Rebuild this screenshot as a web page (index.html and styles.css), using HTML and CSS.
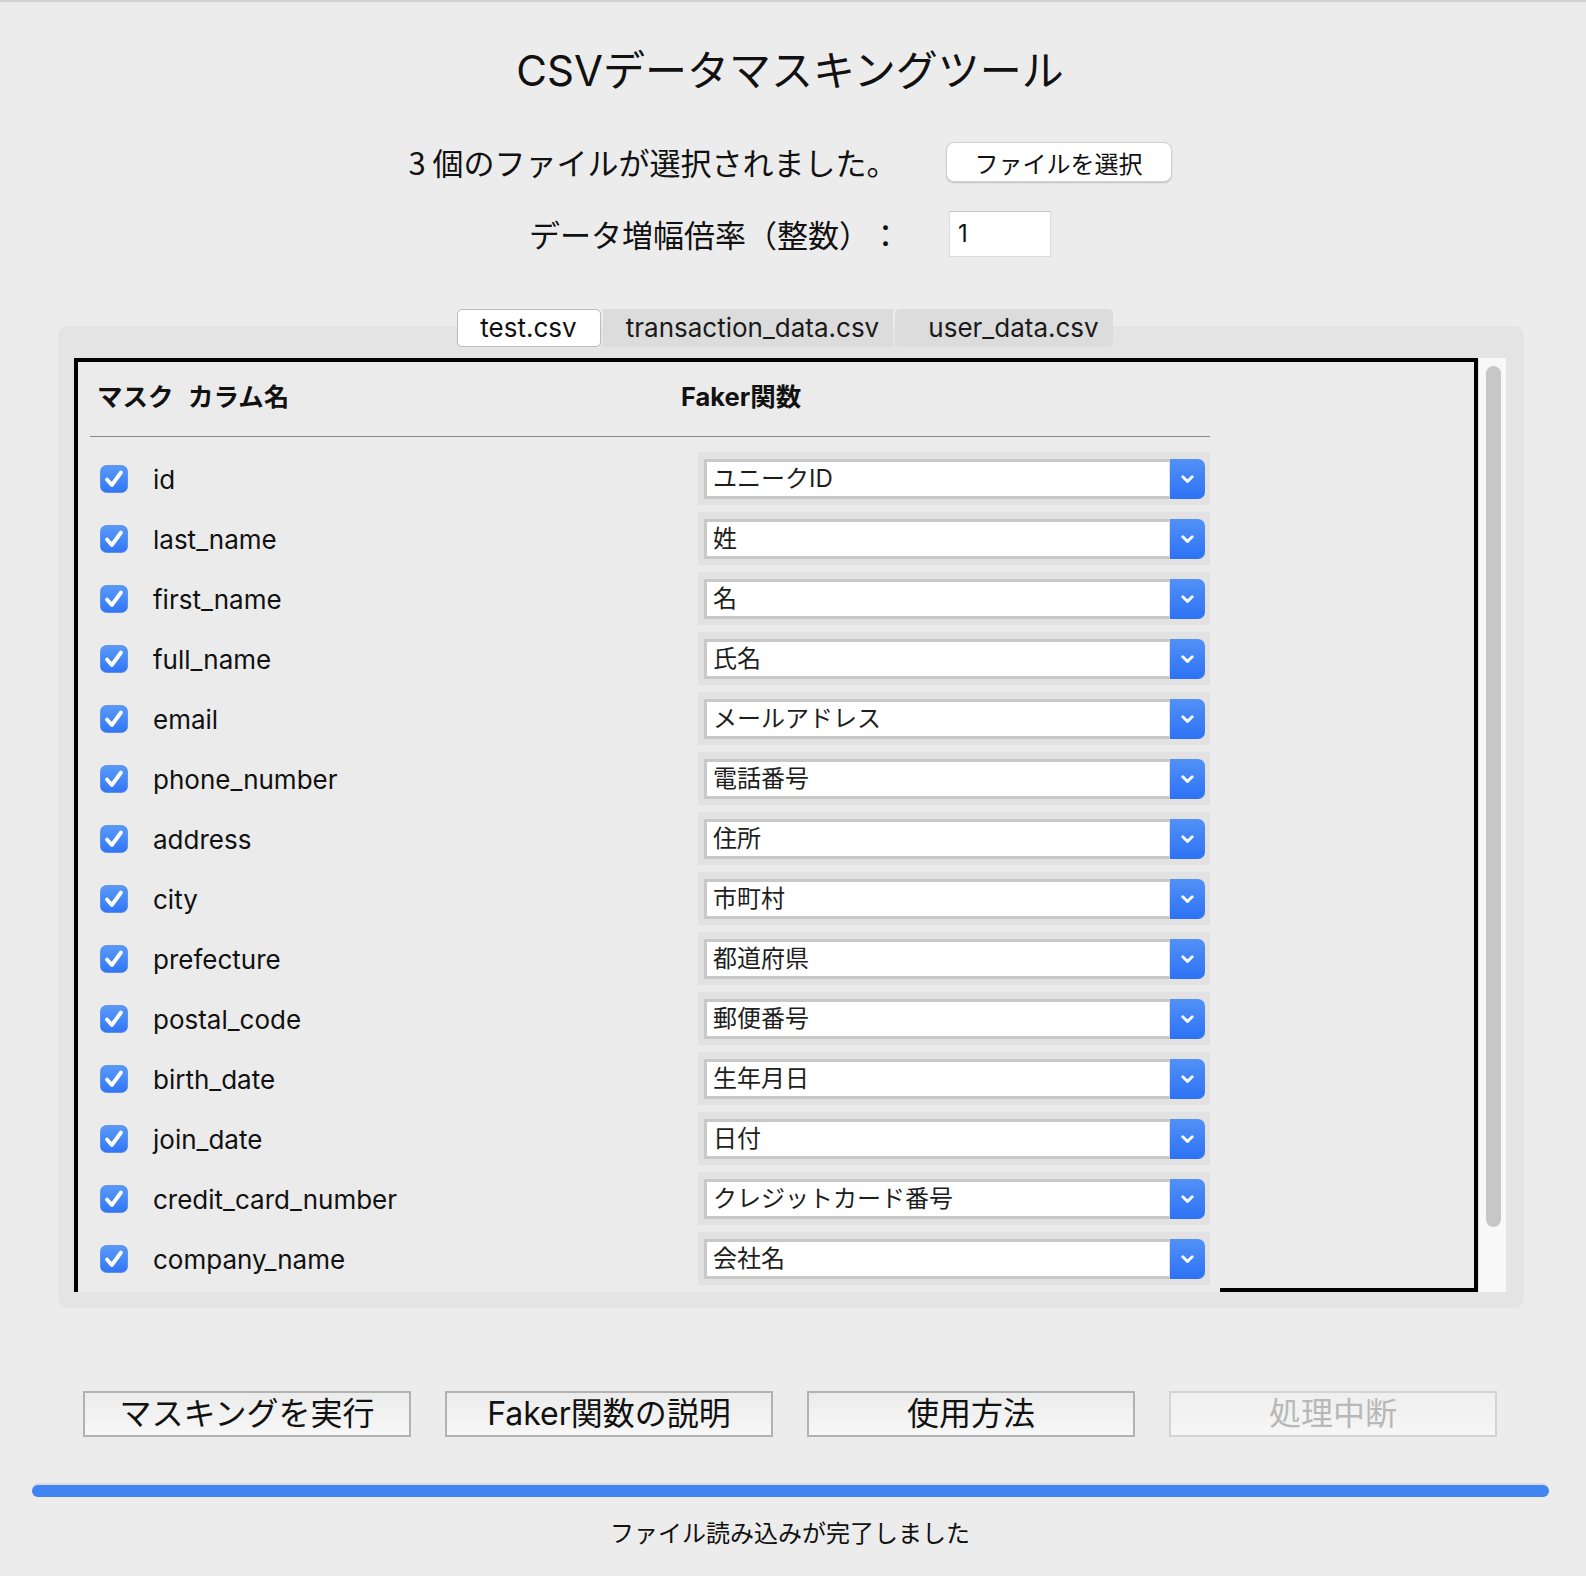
FILE: index.html
```html
<!DOCTYPE html>
<html lang="ja">
<head>
<meta charset="utf-8">
<title>CSVデータマスキングツール</title>
<link rel="stylesheet" href="styles.css">
</head>
<body>
<div class="title">CSVデータマスキングツール</div>

<div class="line line-files">
  <span class="lbl">3 個のファイルが選択されました。</span>
  <button class="pick">ファイルを選択</button>
</div>
<div class="line line-rate">
  <span class="lbl">データ増幅倍率（整数）：</span>
  <div class="entry">1</div>
</div>

<div class="notebook">
  <div class="tabs">
    <div class="tab tab-sel tab-w1">test.csv</div>
    <div class="tab tab-w2">transaction_data.csv</div>
    <div class="tab tab-w3">user_data.csv</div>
  </div>
  <div class="panel-body">
    <div class="frame">
      <div class="list">
        <div class="head">
          <span class="h-mask">マスク</span>
          <span class="h-col">カラム名</span>
          <span class="h-fn">Faker関数</span>
        </div>
        <div class="sep"></div>
        <div class="rows" id="rows"></div>
      </div>
    </div>
    <div class="scrollbar"><div class="thumb"></div></div>
  </div>
</div>

<div class="actions">
  <button class="act">マスキングを実行</button>
  <button class="act">Faker関数の説明</button>
  <button class="act">使用方法</button>
  <button class="act act-off">処理中断</button>
</div>

<div class="progress"><div class="fill"></div></div>
<div class="status">ファイル読み込みが完了しました</div>

<template id="row-tpl">
  <div class="row">
    <svg class="chk" width="28" height="28" viewBox="0 0 28 28">
      <defs>
        <linearGradient id="cg" x1="0" y1="0" x2="0" y2="1">
          <stop offset="0" stop-color="#5a9af9"/>
          <stop offset="1" stop-color="#3176f5"/>
        </linearGradient>
      </defs>
      <rect x="0.5" y="0.5" width="27" height="27" rx="6" fill="url(#cg)" stroke="#3a7be8" stroke-width="0.6"/>
      <polyline points="7,14.5 11.8,20 21,7.5" fill="none" stroke="#fff" stroke-width="3.8" stroke-linecap="round" stroke-linejoin="round"/>
    </svg>
    <span class="col-name"></span>
    <div class="sel-wrap">
      <div class="sel-field"><span class="sel-text"></span></div>
      <div class="sel-btn">
        <svg width="13" height="9" viewBox="0 0 13 9"><polyline points="1.8,1.8 6.5,6.6 11.2,1.8" fill="none" stroke="#fff" stroke-width="2.8" stroke-linecap="round" stroke-linejoin="round"/></svg>
      </div>
    </div>
  </div>
</template>

<script>
  var data = [
    ["id","ユニークID"],["last_name","姓"],["first_name","名"],["full_name","氏名"],
    ["email","メールアドレス"],["phone_number","電話番号"],["address","住所"],
    ["city","市町村"],["prefecture","都道府県"],["postal_code","郵便番号"],
    ["birth_date","生年月日"],["join_date","日付"],["credit_card_number","クレジットカード番号"],
    ["company_name","会社名"]
  ];
  var tpl = document.getElementById('row-tpl');
  var rows = document.getElementById('rows');
  data.forEach(function(d){
    var n = tpl.content.cloneNode(true);
    n.querySelector('.col-name').textContent = d[0];
    n.querySelector('.sel-text').textContent = d[1];
    rows.appendChild(n);
  });
</script>
</body>
</html>
```

FILE: styles.css
```css
* { box-sizing: border-box; }

html, body { margin: 0; padding: 0; }

body {
  background: #ececec;
  border-top: 2px solid #d2d2d2;
  padding-right: 6px;
  font-family: Inter, "Noto Sans CJK JP", sans-serif;
  color: #111;
  text-spacing-trim: space-all;
}

.title {
  margin-top: 42px;
  font-size: 42px;
  line-height: 54px;
  text-align: center;
  color: #111;
}

.line {
  display: flex;
  justify-content: center;
  align-items: center;
  gap: 48px;
}

.line-files { margin-top: 44px; height: 40px; }
.line-rate { margin-top: 29px; height: 46px; }

.lbl {
  font-family: "Noto Sans CJK JP", sans-serif;
  font-size: 31px;
  line-height: 40px;
  color: #111;
  text-spacing-trim: space-all;
}

.pick {
  width: 226px;
  height: 40px;
  background: #fff;
  border: 1px solid #d0d0d0;
  border-radius: 8px;
  box-shadow: 0 1px 1.5px rgba(0,0,0,0.18);
  font-family: inherit;
  font-size: 24px;
  color: #111;
  padding: 0;
}

.entry {
  width: 102px;
  height: 46px;
  background: #fff;
  border: 1px solid #dcdcdc;
  border-top-color: #cbcbcb;
  font-size: 24px;
  line-height: 44px;
  padding-left: 8px;
  color: #111;
}

.notebook {
  margin: 69px 56px 0 58px;
  background: #e4e4e4;
  border-radius: 10px;
  padding: 0 18px 16px 16px;
  display: flex;
  flex-direction: column;
}

.tabs {
  margin-top: -17px;
  display: flex;
  justify-content: center;
  gap: 2px;
  margin-right: 11px;
  height: 38px;
}

.tab {
  height: 38px;
  background: #dcdcdc;
  border-radius: 5px;
  font-size: 26px;
  line-height: 38px;
  text-align: center;
  color: #1a1a1a;
}

.tab-sel {
  background: #fff;
  border: 1px solid #bcbcbc;
  line-height: 36px;
  color: #111;
}

.tab-w1 { width: 144px; }
.tab-w2 { width: 290px; border-radius: 0; padding-left: 10px; }
.tab-w3 { width: 218px; padding-left: 20px; }

.panel-body {
  margin-top: 11px;
  display: flex;
  gap: 1px;
  height: 934px;
}

.frame {
  width: 1404px;
  height: 934px;
  border: 4px solid #000;
  background: #ebebeb;
}

.list {
  width: 1142px;
  height: 930px;
  background: #ebebeb;
}

.head {
  height: 74px;
  padding: 20px 0 0 19px;
  display: flex;
  font-size: 25.5px;
  line-height: 30px;
  font-weight: 700;
  color: #111;
}

.h-mask { width: 91px; }
.h-col { width: 493px; }

.sep {
  margin-left: 12px;
  width: 1120px;
  height: 1px;
  background: #8a8a8a;
}

.rows { padding-top: 15px; }

.row {
  height: 53px;
  margin-bottom: 7px;
  display: flex;
  align-items: center;
  padding-left: 22px;
}

.chk { flex: 0 0 28px; display: block; }

.col-name {
  flex: 0 0 545px;
  margin-left: 25px;
  font-size: 26px;
  line-height: 34px;
  padding-top: 3px;
  color: #111;
}

.sel-wrap {
  flex: 0 0 512px;
  height: 53px;
  background: #e2e2e2;
  padding: 7px 5px 6px 6px;
  display: flex;
}

.sel-field {
  flex: 1;
  height: 40px;
  background: #fff;
  border: 3px solid #c8c8c8;
  border-right: 1px solid #dedede;
  padding-left: 6px;
  font-size: 24px;
  line-height: 34px;
  color: #1e1e1e;
  overflow: hidden;
  white-space: nowrap;
}

.sel-btn {
  flex: 0 0 35px;
  height: 40px;
  background: linear-gradient(#5191f7, #2d72f5);
  border-radius: 0 7px 7px 0;
  display: flex;
  align-items: center;
  justify-content: center;
}

.sel-btn svg { display: block; margin-top: 1px; }

.scrollbar {
  width: 27px;
  height: 934px;
  background: #f8f8f8;
  padding: 8px 5px 0 7px;
}

.thumb {
  width: 15px;
  height: 861px;
  background: #c7c7c7;
  border-radius: 8px;
}

.actions {
  margin: 83px 83px 0 83px;
  display: flex;
  gap: 34px;
}

.act {
  width: 328px;
  height: 46px;
  border: 2px solid #b2b2b2;
  background: linear-gradient(#ececec, #f7f7f7);
  font-family: inherit;
  font-size: 32px;
  line-height: 40px;
  color: #111;
  padding: 0;
  border-radius: 0;
}

.act-off {
  color: #b8b8b8;
  border-color: #d3d3d3;
  background: linear-gradient(#efefef, #f6f6f6);
}

.progress {
  margin: 46px 31px 0 32px;
  height: 14px;
  background: #dadada;
  border-radius: 7px;
  padding-top: 2px;
}

.fill {
  width: 100%;
  height: 12px;
  background: #4185f3;
  border-radius: 6px;
}

.status {
  margin-top: 22px;
  font-size: 24px;
  line-height: 30px;
  text-align: center;
  color: #111;
}
```
